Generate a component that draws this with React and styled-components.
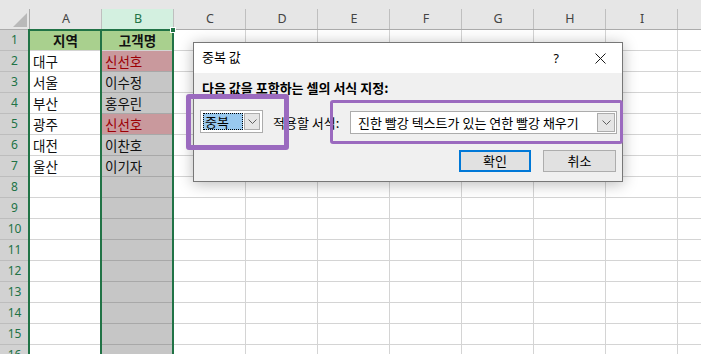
import React from "react";
import styled, { createGlobalStyle } from "styled-components";

const GlobalStyle = createGlobalStyle`
	html, body {
		margin: 0;
		padding: 0;
		background: #ffffff;
	}
	body {
		font-family: "Noto Sans CJK KR", "Noto Sans", sans-serif;
	}
`;

// J is only a sliver at the right edge, its letter falls outside the window
const COLUMNS = ["A", "B", "C", "D", "E", "F", "G", "H", "I", ""];

const DATA = [
	["지역", "고객명"],
	["대구", "신선호"],
	["서울", "이수정"],
	["부산", "홍우린"],
	["광주", "신선호"],
	["대전", "이찬호"],
	["울산", "이기자"],
];
const DUPLICATES = ["신선호"];
const ROW_COUNT = 16;

function cellKind(row, col) {
	if (row === 0 && col < 2) return "title";
	if (col !== 1) return "plain";
	const value = DATA[row] && DATA[row][1];
	if (value && DUPLICATES.includes(value)) return "dup";
	return "selected";
}

const Chevron = () => (
	<svg width="9" height="5" viewBox="0 0 9 5">
		<polyline points="0.5,0.5 4.5,4.5 8.5,0.5" fill="none" stroke="#606060" strokeWidth="1" />
	</svg>
);

const CloseIcon = () => (
	<svg width="11" height="11" viewBox="0 0 11 11">
		<path d="M0.5 0.5 L10.5 10.5 M10.5 0.5 L0.5 10.5" stroke="#1a1a1a" strokeWidth="1" />
	</svg>
);

function App() {
	return (
		<Sheet>
			<GlobalStyle />
			<Grid>
				<Corner>
					<svg width="14" height="14" viewBox="0 0 14 14">
						<polygon points="14,0 14,14 0,14" fill="#b9b9b9" />
					</svg>
				</Corner>
				{COLUMNS.map((c, i) => (
					<ColHeader key={i} $active={c === "B"}>{c}</ColHeader>
				))}
				{Array.from({ length: ROW_COUNT }).map((_, r) => (
					<React.Fragment key={r}>
						<RowHeader>{r + 1}</RowHeader>
						{COLUMNS.map((c, ci) => (
							<Cell key={ci} $kind={cellKind(r, ci)}>
								{ci < 2 && DATA[r] ? DATA[r][ci] : ""}
							</Cell>
						))}
					</React.Fragment>
				))}
			</Grid>

			<SelectionFrame $left={28} />
			<SelectionFrame $left={100}>
				<FillHandle />
			</SelectionFrame>

			<Dialog>
				<TitleBar>
					<Title>중복 값</Title>
					<TitleTools>
						<HelpMark>?</HelpMark>
						<CloseIcon />
					</TitleTools>
				</TitleBar>
				<Body>
					<Prompt>다음 값을 포함하는 셀의 서식 지정:</Prompt>
					<OptionRow>
						<Combo $width={63} $inset={2}>
							<ComboValue $focused>중복</ComboValue>
							<DropButton $width={16}><Chevron /></DropButton>
						</Combo>
						<FieldLabel>적용할 서식:</FieldLabel>
						<Combo $width={267} $inset={1} $push>
							<ComboValue>진한 빨강 텍스트가 있는 연한 빨강 채우기</ComboValue>
							<DropButton $width={18}><Chevron /></DropButton>
						</Combo>
					</OptionRow>
					<ButtonRow>
						<DialogButton $default>확인</DialogButton>
						<DialogButton>취소</DialogButton>
					</ButtonRow>
				</Body>
				<Highlight $left={-8} $top={51} $width={103} $height={56} $stroke={5} />
				<Highlight $left={136} $top={57} $width={293} $height={44} $stroke={3} />
			</Dialog>
		</Sheet>
	);
}

const Sheet = styled.div`
	position: relative;
	width: 701px;
	height: 354px;
	overflow: hidden;
	background: #ffffff;
`;

const Grid = styled.div`
	display: grid;
	grid-template-columns: 30px repeat(10, 72px);
	grid-template-rows: 30px repeat(${ROW_COUNT}, 21px);
`;

const Corner = styled.div`
	box-sizing: border-box;
	background: linear-gradient(#ababab, #ababab) right 9px / 1px calc(100% - 9px) no-repeat, #e6e6e6;
	border-bottom: 1px solid #ababab;
	display: flex;
	align-items: flex-end;
	justify-content: flex-end;
	padding: 0 3px 2px 0;
`;

const ColHeader = styled.div`
	box-sizing: border-box;
	padding-top: 9px;
	border-bottom: 1px solid #ababab;
	background: ${(p) =>
		p.$active
			? "linear-gradient(#bfbfbf, #bfbfbf) right 9px / 1px calc(100% - 9px) no-repeat, linear-gradient(#d3f0e0, #d3f0e0) 0 9px / 100% 100% no-repeat, #e6e6e6"
			: "linear-gradient(#bfbfbf, #bfbfbf) right 9px / 1px calc(100% - 9px) no-repeat, #e6e6e6"};
	color: ${(p) => (p.$active ? "#217346" : "#444444")};
	font-family: "Noto Sans", sans-serif;
	font-size: 12.5px;
	line-height: 20px;
	text-align: center;
`;

const RowHeader = styled.div`
	box-sizing: border-box;
	background: #d2d2d2;
	border-right: 1px solid #ababab;
	border-bottom: 1px solid #bdbdbd;
	color: #217346;
	font-family: "Noto Sans", sans-serif;
	font-size: 12px;
	line-height: 20px;
	text-align: center;
`;

const CELL_BG = {
	plain: "#ffffff",
	title: "#a9d08e",
	selected: "#c6c6c6",
	dup: "#c9999d",
};

const Cell = styled.div`
	box-sizing: border-box;
	background: ${(p) => CELL_BG[p.$kind]};
	border-right: 1px solid #d4d4d4;
	border-bottom: 1px solid ${(p) => (p.$kind === "selected" || p.$kind === "dup" ? "#a8a8a8" : "#d4d4d4")};
	color: ${(p) => (p.$kind === "dup" ? "#9c0006" : "#111111")};
	font-weight: ${(p) => (p.$kind === "title" ? 700 : 400)};
	text-align: ${(p) => (p.$kind === "title" ? "center" : "left")};
	font-size: 13.5px;
	line-height: 20px;
	padding: 0 3px;
	white-space: nowrap;
	overflow: hidden;
`;

const SelectionFrame = styled.div`
	position: absolute;
	left: ${(p) => p.$left}px;
	top: 29px;
	width: 74px;
	bottom: 0;
	box-sizing: border-box;
	border: 2px solid #217346;
	border-bottom: none;
	pointer-events: none;
`;

const FillHandle = styled.div`
	position: absolute;
	right: -4px;
	top: -4px;
	width: 6px;
	height: 6px;
	box-sizing: border-box;
	background: #217346;
	border: 1px solid #ffffff;
`;

const Dialog = styled.div`
	position: absolute;
	left: 193px;
	top: 42px;
	width: 430px;
	height: 140px;
	box-sizing: border-box;
	border: 1px solid #777777;
	background: #f0f0f0;
	box-shadow: 0 2px 14px rgba(0, 0, 0, 0.28);
	font-size: 13px;
	color: #000000;
`;

const TitleBar = styled.div`
	height: 30px;
	background: #ffffff;
	display: flex;
	align-items: center;
	justify-content: space-between;
	padding: 0 16px 0 8px;
`;

const Title = styled.span`
	font-size: 13px;
	line-height: 16px;
	margin-top: -2px;
`;

const TitleTools = styled.div`
	display: flex;
	align-items: center;
	gap: 36px;
`;

const HelpMark = styled.span`
	font-family: "Noto Sans", sans-serif;
	font-size: 12.5px;
`;

const Body = styled.div`
	display: flex;
	flex-direction: column;
	padding: 7px 5px 0 6px;
`;

const Prompt = styled.div`
	font-weight: 700;
	line-height: 16px;
	margin-left: 2px;
`;

const OptionRow = styled.div`
	display: flex;
	align-items: flex-start;
	margin-top: 14px;
`;

const Combo = styled.div`
	box-sizing: border-box;
	width: ${(p) => p.$width}px;
	height: 23px;
	display: flex;
	gap: 1px;
	padding: ${(p) => p.$inset}px;
	border: 1px solid #acacac;
	background: #ffffff;
	margin-left: ${(p) => (p.$push ? "auto" : "0")};
	margin-top: ${(p) => (p.$push ? "1px" : "0")};
`;

const ComboValue = styled.div`
	flex: 1;
	box-sizing: border-box;
	line-height: ${(p) => (p.$focused ? "15px" : "17px")};
	white-space: nowrap;
	overflow: hidden;
	padding-left: ${(p) => (p.$focused ? "1px" : "5px")};
	background: ${(p) => (p.$focused ? "#99c9ef" : "transparent")};
	border: 1px dotted ${(p) => (p.$focused ? "#000000" : "transparent")};
`;

const DropButton = styled.div`
	box-sizing: border-box;
	width: ${(p) => p.$width}px;
	display: flex;
	align-items: center;
	justify-content: center;
	background: #e5e5e5;
	border: 1px solid #acacac;
`;

const FieldLabel = styled.span`
	margin-left: 10px;
	line-height: 23px;
	margin-top: 1px;
	white-space: nowrap;
`;

const ButtonRow = styled.div`
	display: flex;
	justify-content: flex-end;
	gap: 12px;
	margin-top: 16px;
	padding-right: 1px;
`;

const DialogButton = styled.button`
	box-sizing: border-box;
	width: ${(p) => (p.$default ? 72 : 73)}px;
	height: 22px;
	padding: 0;
	font-family: "Noto Sans CJK KR", "Noto Sans", sans-serif;
	font-size: 13px;
	line-height: 16px;
	color: #000000;
	background: #e1e1e1;
	border: ${(p) => (p.$default ? "2px solid #0078d7" : "1px solid #adadad")};
`;

const Highlight = styled.div`
	position: absolute;
	left: ${(p) => p.$left}px;
	top: ${(p) => p.$top}px;
	width: ${(p) => p.$width}px;
	height: ${(p) => p.$height}px;
	box-sizing: border-box;
	border: ${(p) => p.$stroke}px solid #9b6abf;
	border-radius: 3px;
	pointer-events: none;
`;

export default App;
